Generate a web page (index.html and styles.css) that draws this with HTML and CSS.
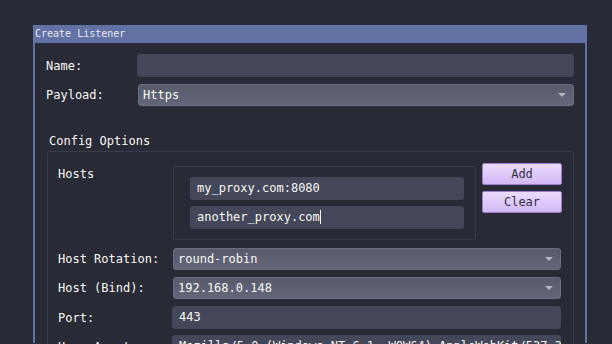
FILE: index.html
```html
<!DOCTYPE html>
<html lang="en">
<head>
  <meta charset="UTF-8">
  <title>Create Listener</title>
  <link rel="stylesheet" href="styles.css">
</head>
<body>
  <div class="window">
    <div class="titlebar">Create Listener</div>
    <div class="content">
      <div class="row">
        <label class="label">Name:</label>
        <div class="input name-input"></div>
      </div>
      <div class="row">
        <label class="label">Payload:</label>
        <div class="combo payload-combo">Https<span class="arrow"></span></div>
      </div>

      <div class="group-title">Config Options</div>
      <div class="group">
        <div class="grow hosts-row">
          <label class="glabel hosts-label">Hosts</label>
          <div class="hosts-list">
            <div class="input host-item">my_proxy.com:8080</div>
            <div class="input host-item">another_proxy.com<span class="caret"></span></div>
          </div>
          <div class="buttons">
            <button class="btn">Add</button>
            <button class="btn">Clear</button>
          </div>
        </div>
        <div class="grow rot-row">
          <label class="glabel">Host Rotation:</label>
          <div class="combo">round-robin<span class="arrow"></span></div>
        </div>
        <div class="grow bind-row">
          <label class="glabel">Host (Bind):</label>
          <div class="combo">192.168.0.148<span class="arrow"></span></div>
        </div>
        <div class="grow port-row">
          <label class="glabel">Port:</label>
          <div class="input field">443</div>
        </div>
        <div class="grow ua-row">
          <label class="glabel">User Agent:</label>
          <div class="input field">Mozilla/5.0 (Windows NT 6.1; WOW64) AppleWebKit/537.36 (KHTML, like Gecko)</div>
        </div>
      </div>
    </div>
  </div>
</body>
</html>
```

FILE: styles.css
```css
/* Base */
* { margin: 0; padding: 0; box-sizing: border-box; }
body {
  background: #282a36; color: #f8f8f2;
  font-family: "DejaVu Sans Mono", monospace; font-size: 12px;
  padding: 25px 0 0 33px; height: 344px; overflow: hidden;
}

/* Window */
.window { width: 554px; }
.titlebar {
  height: 18px; background: #6272a4; color: #e8e8f0;
  font-size: 10px; line-height: 18px; padding-left: 2px;
}
.content {
  border-left: 2px solid #6272a4; border-right: 2px solid #6272a4;
  padding: 11px 11px 0 11px; height: 300px;
}

/* Rows */
.row { display: flex; align-items: center; margin-bottom: 7px; }
.label { width: 91px; }
.input {
  background: #44475a; border-radius: 3px; height: 23px;
  line-height: 23px; padding-left: 6px; white-space: nowrap; overflow: hidden;
}
.name-input { flex: 1; }
.combo {
  position: relative; flex: 1; height: 22px; line-height: 20px;
  padding-left: 4px; border: 1px solid #6b6e80; border-radius: 3px;
  background: linear-gradient(#585b6b, #63667a);
}
.payload-combo { margin-left: 1px; }
.arrow {
  position: absolute; right: 7px; top: 8px;
  border-left: 4px solid transparent; border-right: 4px solid transparent;
  border-top: 4px solid #b4b6c4;
}

/* Group box */
.group-title { margin: 28px 0 0 3px; line-height: 14px; }
.group {
  margin: 3px 0 0 1px; border: 1px solid #3a3c4a; border-bottom: none;
  border-radius: 3px 3px 0 0; padding: 11px 12px 0 10px; height: 200px;
}
.grow { display: flex; align-items: center; }
.glabel { width: 115px; flex: none; }
.hosts-row { align-items: flex-start; }
.hosts-label { margin-top: 4px; }
.hosts-list {
  flex: none; width: 303px; margin-top: 3px; border: 1px solid #3a3c4a; border-radius: 2px;
  padding: 10px 11px 10px 16px; display: flex; flex-direction: column; gap: 6px;
}
.host-item { padding-left: 7px; }
.caret { display: inline-block; width: 1px; height: 14px; background: #f8f8f2; vertical-align: -3px; }
.buttons { flex: none; margin-left: 6px; width: 80px; display: flex; flex-direction: column; gap: 6px; }
.btn {
  height: 22px; font-family: inherit; font-size: 12px; color: #33303f;
  background: linear-gradient(#eadcfc, #d2b8f6); border: 1px solid #a07ccd; border-radius: 2px;
}
.rot-row { margin-top: 8px; }
.bind-row { margin-top: 7px; }
.port-row { margin-top: 7px; }
.ua-row { margin-top: 6px; }
.field { flex: 1; padding-left: 7px; margin-left: -1px; }
```
